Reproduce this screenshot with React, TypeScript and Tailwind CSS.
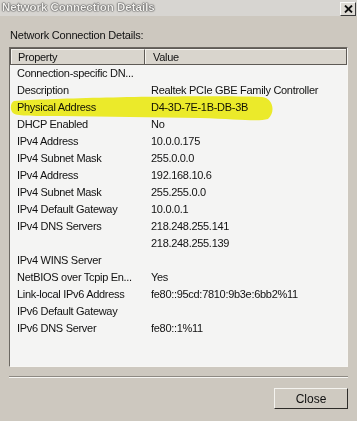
import React from "react";

const rows: [string, string][] = [
  ["Connection-specific DN...", ""],
  ["Description", "Realtek PCIe GBE Family Controller"],
  ["Physical Address", "D4-3D-7E-1B-DB-3B"],
  ["DHCP Enabled", "No"],
  ["IPv4 Address", "10.0.0.175"],
  ["IPv4 Subnet Mask", "255.0.0.0"],
  ["IPv4 Address", "192.168.10.6"],
  ["IPv4 Subnet Mask", "255.255.0.0"],
  ["IPv4 Default Gateway", "10.0.0.1"],
  ["IPv4 DNS Servers", "218.248.255.141"],
  ["", "218.248.255.139"],
  ["IPv4 WINS Server", ""],
  ["NetBIOS over Tcpip En...", "Yes"],
  ["Link-local IPv6 Address", "fe80::95cd:7810:9b3e:6bb2%11"],
  ["IPv6 Default Gateway", ""],
  ["IPv6 DNS Server", "fe80::1%11"],
];

export default function App() {
  return (
    <div
      className="relative w-[357px] h-[421px] bg-[#cdc8bf] text-[11px] text-[#111] flex flex-col overflow-hidden"
      style={{ fontFamily: '"Liberation Sans", Arial, sans-serif' }}
    >
      {/* title bar */}
      <div className="h-[16px] bg-[#d7d5d1] flex items-center justify-between pl-[2px] pr-[1px] shrink-0">
        <span className="font-bold text-[11.5px] text-[#f2f1ee] [text-shadow:0_0_1px_#333,0_0_1px_#444,0_0_2px_#666] leading-none">
          Network Connection Details
        </span>
        <div className="w-[16px] h-[14px] mt-[2px] bg-[#dedbd5] border border-t-[#fafafa] border-l-[#fafafa] border-b-[#3a3a3a] border-r-[#3a3a3a] flex items-center justify-center">
          <svg width="9" height="8" viewBox="0 0 9 8">
            <path d="M1 0.5 L8 7.5 M8 0.5 L1 7.5" stroke="#111" strokeWidth="1.8" />
          </svg>
        </div>
      </div>

      <div className="flex flex-col px-[9px] pt-[12px]">
        <div className="leading-[14px] pl-[1px] tracking-[-0.2px]">Network Connection Details:</div>

        {/* list box */}
        <div className="mt-[5px] h-[320px] bg-[#f4f4f3] border border-t-[#6c6862] border-l-[#6c6862] border-b-[#f7f6f3] border-r-[#f7f6f3] flex flex-col tracking-[-0.3px]">
          <div className="h-[17px] flex shrink-0 bg-[#d9d5cd] border border-[#5e5a55]">
            <div className="w-[134px] border-r border-r-[#5e5a55] pl-[6px] flex items-center border-t border-t-[#f5f3ee] border-l border-l-[#f5f3ee]">
              Property
            </div>
            <div className="flex-1 pl-[7px] flex items-center border-t border-t-[#f5f3ee] border-l border-l-[#f5f3ee]">
              Value
            </div>
          </div>
          <div className="flex flex-col">
            {rows.map(([p, v], i) => (
              <div key={i} className="h-[17px] flex items-center">
                <div className="w-[134px] pl-[7px] whitespace-nowrap">{p}</div>
                <div className="flex-1 pl-[7px] whitespace-nowrap">{v}</div>
              </div>
            ))}
          </div>
        </div>

        {/* separator */}
        <div className="mt-[9px] h-[2px] border-t border-t-[#8d8982] border-b border-b-[#f7f6f3]" />

        <div className="mt-[10px] flex justify-end">
          <button className="w-[74px] h-[21px] bg-[#cfcac1] border border-t-[#f4f3ef] border-l-[#f4f3ef] border-b-[#2e2c29] border-r-[#2e2c29] text-[12px] text-[#111] flex items-center justify-center">
            Close
          </button>
        </div>
      </div>

      {/* yellow marker highlight */}
      <svg
        className="absolute left-0 top-0 pointer-events-none mix-blend-multiply"
        width="357"
        height="421"
        viewBox="0 0 357 421"
      >
        <path
          d="M14 101 C60 98 200 95 262 97 C273 98 276 112 268 119 C258 122 238 119 200 118 L60 116 C30 116 16 116 13 113 C10 110 10 103 14 101 Z"
          fill="#f6f52c"
        />
      </svg>
    </div>
  );
}
